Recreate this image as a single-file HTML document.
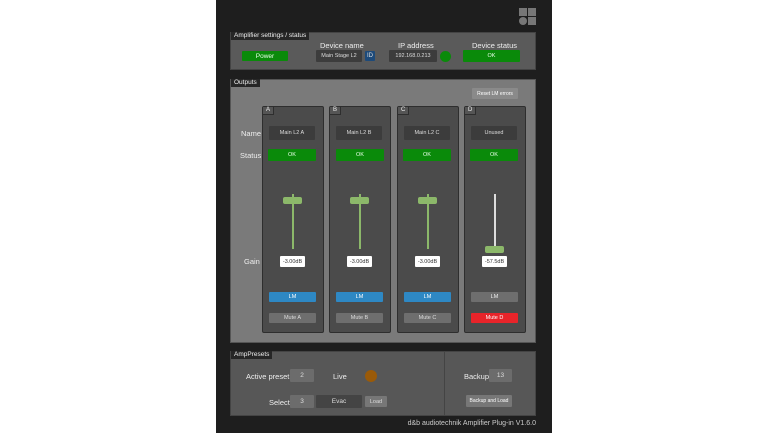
<!DOCTYPE html><html><head><style>
*{margin:0;padding:0;box-sizing:border-box}
body{width:768px;height:433px;background:#fff;position:relative;overflow:hidden;font-family:"Liberation Sans",sans-serif;}
.a{position:absolute}
.t{position:absolute;color:#eee;font-size:7.5px;white-space:nowrap}
.f{position:absolute;background:#3c3c3c;color:#ddd;font-size:5.5px;display:flex;align-items:center;justify-content:center;border-radius:1px}
.g{background:#0a8a0a;color:#e8ffe8}
.tab{position:absolute;background:#262626;color:#eee;font-size:6.5px;padding:0 3px;line-height:8px}
.strip{position:absolute;top:106px;width:62px;height:227px;background:#4b4b4b;border:1px solid #2e2e2e;border-radius:2px}
.lbl{position:absolute;left:0;top:0;width:11px;height:8px;color:#eee;font-size:6px;padding-left:3px;border-right:1px solid #2e2e2e;border-bottom:1px solid #2e2e2e;background:#555}
</style></head><body>
<div class="a" style="left:216px;top:0;width:336px;height:433px;background:#1e1e1e"></div>
<div class="a" style="left:519px;top:8px;width:8px;height:8px;background:#777"></div>
<div class="a" style="left:528px;top:8px;width:8px;height:8px;background:#777"></div>
<div class="a" style="left:519px;top:17px;width:8px;height:8px;background:#777;border-radius:50%"></div>
<div class="a" style="left:528px;top:17px;width:8px;height:8px;background:#777"></div>

<div class="a" style="left:230px;top:32px;width:306px;height:38px;background:#5a5a5a;border:1px solid #444"></div>
<div class="tab" style="left:231px;top:32px">Amplifier settings / status</div>
<div class="f g" style="left:242px;top:51px;width:46px;height:10px;font-size:6.5px">Power</div>
<div class="t" style="left:320px;top:41px">Device name</div>
<div class="f" style="left:316px;top:50px;width:46px;height:12px">Main Stage L2</div>
<div class="f" style="left:365px;top:51px;width:10px;height:10px;background:#1d4a7a;font-size:6px">ID</div>
<div class="t" style="left:398px;top:41px">IP address</div>
<div class="f" style="left:389px;top:50px;width:48px;height:12px">192.168.0.213</div>
<div class="a" style="left:440px;top:51px;width:11px;height:11px;border-radius:50%;background:#0a8a0a"></div>
<div class="t" style="left:472px;top:41px">Device status</div>
<div class="f g" style="left:463px;top:50px;width:57px;height:12px">OK</div>

<div class="a" style="left:230px;top:79px;width:306px;height:264px;background:#7a7a7a;border:1px solid #555"></div>
<div class="tab" style="left:231px;top:79px">Outputs</div>
<div class="f" style="left:472px;top:88px;width:46px;height:11px;background:#8a8a8a;color:#fff;font-size:5px">Reset LM errors</div>
<div class="t" style="left:241px;top:129px">Name</div>
<div class="t" style="left:240px;top:151px">Status</div>
<div class="t" style="left:244px;top:257px">Gain</div>

<div class="strip" style="left:262px"><div class="lbl">A</div></div>
<div class="strip" style="left:329px"><div class="lbl">B</div></div>
<div class="strip" style="left:397px"><div class="lbl">C</div></div>
<div class="strip" style="left:464px"><div class="lbl">D</div></div>

<div class="f" style="left:269px;top:126px;width:46px;height:14px">Main L2 A</div>
<div class="f" style="left:336px;top:126px;width:46px;height:14px">Main L2 B</div>
<div class="f" style="left:404px;top:126px;width:46px;height:14px">Main L2 C</div>
<div class="f" style="left:471px;top:126px;width:46px;height:14px">Unused</div>
<div class="f g" style="left:268px;top:149px;width:48px;height:12px">OK</div>
<div class="f g" style="left:336px;top:149px;width:48px;height:12px">OK</div>
<div class="f g" style="left:403px;top:149px;width:48px;height:12px">OK</div>
<div class="f g" style="left:470px;top:149px;width:48px;height:12px">OK</div>

<div class="a" style="left:292px;top:194px;width:2px;height:55px;background:#8cb86a"></div>
<div class="a" style="left:283px;top:197px;width:19px;height:7px;background:#8cb86a;border-radius:2px"></div>
<div class="a" style="left:359px;top:194px;width:2px;height:55px;background:#8cb86a"></div>
<div class="a" style="left:350px;top:197px;width:19px;height:7px;background:#8cb86a;border-radius:2px"></div>
<div class="a" style="left:427px;top:194px;width:2px;height:55px;background:#8cb86a"></div>
<div class="a" style="left:418px;top:197px;width:19px;height:7px;background:#8cb86a;border-radius:2px"></div>
<div class="a" style="left:494px;top:194px;width:2px;height:55px;background:#ddd"></div>
<div class="a" style="left:485px;top:246px;width:19px;height:7px;background:#8cb86a;border-radius:2px"></div>

<div class="f" style="left:280px;top:256px;width:25px;height:11px;background:#fff;color:#333">-3.00dB</div>
<div class="f" style="left:347px;top:256px;width:25px;height:11px;background:#fff;color:#333">-3.00dB</div>
<div class="f" style="left:415px;top:256px;width:25px;height:11px;background:#fff;color:#333">-3.00dB</div>
<div class="f" style="left:482px;top:256px;width:25px;height:11px;background:#fff;color:#333">-57.5dB</div>

<div class="f" style="left:269px;top:292px;width:47px;height:10px;background:#2e88c4;color:#fff">LM</div>
<div class="f" style="left:336px;top:292px;width:47px;height:10px;background:#2e88c4;color:#fff">LM</div>
<div class="f" style="left:404px;top:292px;width:47px;height:10px;background:#2e88c4;color:#fff">LM</div>
<div class="f" style="left:471px;top:292px;width:47px;height:10px;background:#6e6e6e;color:#eee">LM</div>
<div class="f" style="left:269px;top:313px;width:47px;height:10px;background:#6e6e6e">Mute A</div>
<div class="f" style="left:336px;top:313px;width:47px;height:10px;background:#6e6e6e">Mute B</div>
<div class="f" style="left:404px;top:313px;width:47px;height:10px;background:#6e6e6e">Mute C</div>
<div class="f" style="left:471px;top:313px;width:47px;height:10px;background:#e8242a;color:#fff">Mute D</div>

<div class="a" style="left:230px;top:351px;width:306px;height:65px;background:#575757;border:1px solid #444"></div>
<div class="a" style="left:444px;top:351px;width:1px;height:65px;background:#444"></div>
<div class="tab" style="left:231px;top:351px">AmpPresets</div>
<div class="t" style="left:246px;top:372px">Active preset</div>
<div class="f" style="left:290px;top:369px;width:24px;height:13px;background:#6c6c6c;font-size:6.5px">2</div>
<div class="t" style="left:333px;top:372px">Live</div>
<div class="a" style="left:365px;top:370px;width:12px;height:12px;border-radius:50%;background:#9a5a08"></div>
<div class="t" style="left:269px;top:398px">Select</div>
<div class="f" style="left:290px;top:395px;width:24px;height:13px;background:#6c6c6c;font-size:6.5px">3</div>
<div class="f" style="left:316px;top:395px;width:46px;height:13px;background:#444;font-size:6.5px">Evac</div>
<div class="f" style="left:365px;top:396px;width:22px;height:11px;background:#777">Load</div>
<div class="t" style="left:464px;top:372px">Backup</div>
<div class="f" style="left:489px;top:369px;width:23px;height:13px;background:#6c6c6c;font-size:6.5px">13</div>
<div class="f" style="left:466px;top:395px;width:46px;height:12px;background:#777;color:#fff;font-size:5px">Backup and Load</div>

<div class="t" style="right:232px;top:420px;color:#ccc;font-size:7px">d&amp;b audiotechnik Amplifier Plug-in V1.6.0</div>
</body></html>
